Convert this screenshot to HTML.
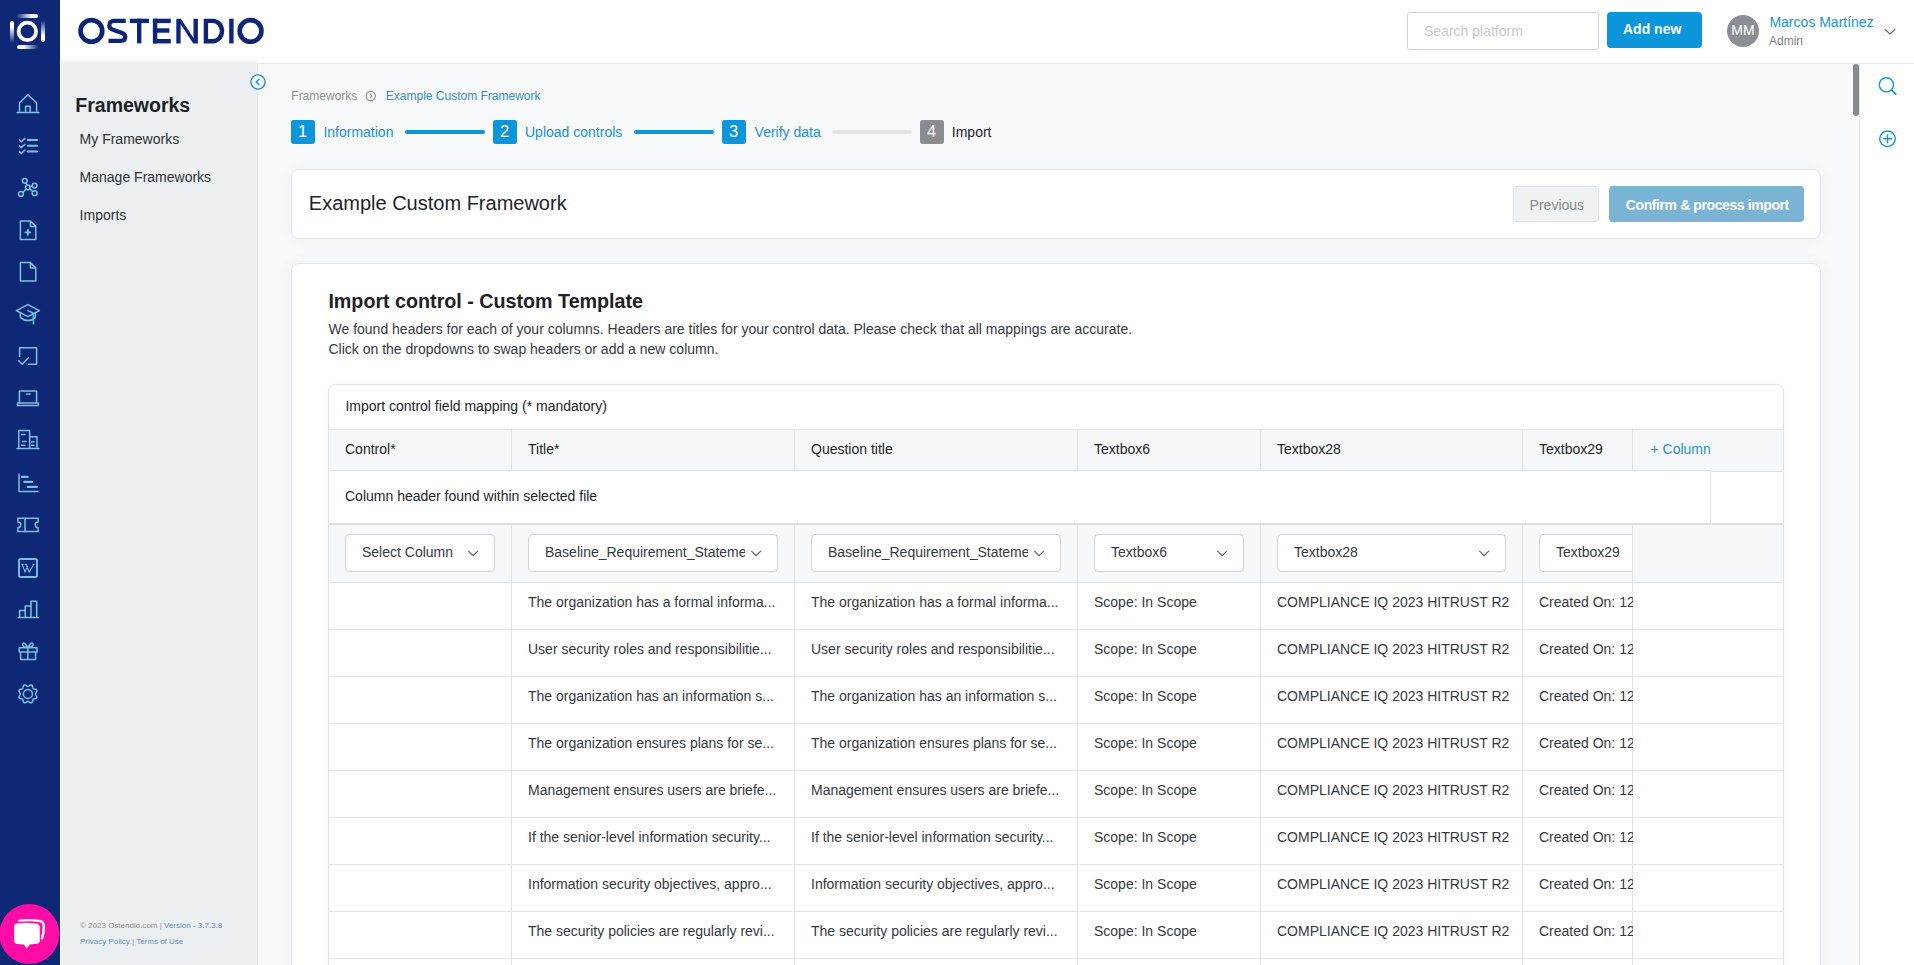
<!DOCTYPE html>
<html><head><meta charset="utf-8">
<style>
*{box-sizing:border-box;margin:0;padding:0}
html,body{width:1914px;height:965px;overflow:hidden;font-family:"Liberation Sans",sans-serif;background:#f7f8fa}
.r{position:absolute}
.t{position:absolute;white-space:nowrap;line-height:1}
</style></head>
<body>
<div class="r" style="left:0px;top:0px;width:60px;height:965px;background:#0e2876"></div>
<div class="r" style="left:60px;top:0px;width:1854px;height:63px;background:#fff"></div>
<div class="r" style="left:258px;top:63px;width:1656px;height:1px;background:#e4e6e9"></div>
<div class="r" style="left:60px;top:64px;width:198px;height:901px;background:#eceff2"></div>
<div class="r" style="left:61px;top:57px;width:197px;height:7px;background:linear-gradient(to bottom,rgba(236,239,242,0),#eceff2)"></div>
<div class="r" style="left:60px;top:57px;width:1px;height:908px;background:#fff"></div>
<div class="r" style="left:257px;top:64px;width:1px;height:901px;background:#e7e9ec"></div>
<div class="r" style="left:258px;top:64px;width:1594px;height:901px;background:#f8f9fa"></div>
<div class="r" style="left:1852px;top:64px;width:7px;height:901px;background:#f9f9fa"></div>
<div class="r" style="left:1853px;top:64px;width:6px;height:52px;background:#878a8e;border-radius:3px"></div>
<div class="r" style="left:1859px;top:64px;width:1px;height:901px;background:#e2e3e5"></div>
<div class="r" style="left:1860px;top:64px;width:54px;height:901px;background:#fff"></div>
<svg class="r" style="left:0;top:0" width="60" height="60" viewBox="0 0 60 60">
<defs>
<linearGradient id="gt" x1="0" x2="1" y1="0" y2="0"><stop offset="0" stop-color="#fff" stop-opacity="0"/><stop offset="0.72" stop-color="#fff" stop-opacity="1"/></linearGradient>
<linearGradient id="gb" x1="1" x2="0" y1="0" y2="0"><stop offset="0" stop-color="#fff" stop-opacity="0"/><stop offset="0.72" stop-color="#fff" stop-opacity="1"/></linearGradient>
<linearGradient id="gl" x1="0" x2="0" y1="1" y2="0"><stop offset="0" stop-color="#fff" stop-opacity="0"/><stop offset="0.72" stop-color="#fff" stop-opacity="1"/></linearGradient>
<linearGradient id="gr" x1="0" x2="0" y1="0" y2="1"><stop offset="0" stop-color="#fff" stop-opacity="0"/><stop offset="0.72" stop-color="#fff" stop-opacity="1"/></linearGradient>
</defs>
<rect x="16" y="14" width="22" height="4" rx="2" fill="url(#gt)"/>
<rect x="17" y="45" width="21.5" height="4" rx="2" fill="url(#gb)"/>
<rect x="10" y="21" width="4" height="22" rx="2" fill="url(#gl)"/>
<rect x="41" y="20" width="4" height="22" rx="2" fill="url(#gr)"/>
<circle cx="27.4" cy="31.4" r="8.7" fill="none" stroke="#fff" stroke-width="3.8"/>
</svg>
<svg class="r" style="left:0;top:80px" width="60" height="640" viewBox="0 80 60 640">
<g fill="none" stroke="#78c0e4" stroke-width="1.5" stroke-linecap="round" stroke-linejoin="round">
<!-- home -->
<path d="M17 112.6 H39 M19.5 112.6 V102.8 L27.9 94.8 L36.6 102.8 V112.6 M25.6 112.6 V106.2 H30.2 V112.6"/>
<!-- checklist -->
<path d="M19.5 140 l1.8 1.8 l3.6 -3.4 M19.5 145.8 l1.8 1.8 l3.6 -3.4 M19.5 151.6 l1.8 1.8 l3.6 -3.4"/>
<path d="M27.8 140 H37 M27.8 145.8 H37 M27.8 151.6 H37" stroke-width="2"/>
<!-- network -->
<circle cx="27.9" cy="187.4" r="2.3"/><circle cx="24.8" cy="180.8" r="2.4"/><circle cx="34.6" cy="185.6" r="2.4"/><circle cx="34.6" cy="193.2" r="2.4"/><circle cx="21" cy="193.9" r="2.4"/>
<path d="M25.9 183 L27 185.3 M30.1 186.8 L32.3 186.1 M29.9 188.7 L32.5 191.6 M25.9 188.7 L23.1 192.6"/>
<!-- doc plus -->
<path d="M20.4 221 H30.4 L35.8 226.4 V239.4 H20.4 Z M30.4 221 V226.4 H35.8"/>
<path d="M25.5 232.4 H30.3 M27.9 230 V234.8" stroke-width="1.9"/>
<!-- doc -->
<path d="M20.4 262.6 H30.4 L35.8 268 V281 H20.4 Z M30.4 262.6 V268 H35.8"/>
<!-- graduation -->
<path d="M16.4 310.6 L27.9 304.6 L39.4 310.6 L27.9 316.6 Z"/>
<path d="M20.4 312.8 V317.6 Q27.9 323.6 35.4 317.6 V312.8"/>
<path d="M27.9 310.6 L33.4 313.2 V323.8"/>
<!-- check square -->
<path d="M19.6 356.4 V347.8 H36.6 V364.2 H28.6"/>
<path d="M18.8 360.8 L22.2 364.2 L28.4 357.8"/>
<!-- laptop -->
<path d="M19.4 403 V391 H36.6 V403 M17.6 403 H38.2 V405.4 H17.6 Z M26.4 393.9 H30"/>
<!-- building -->
<path d="M16.8 448.4 H39 M18.8 448.4 V430.6 H29.6 V448.4 M29.6 436.8 H37 V448.4"/>
<path d="M21.6 434.6 H25 M22.4 441.4 H26 M21.6 445.2 H25 M31.6 441.8 H34 M31.6 445.2 H34" stroke-width="1.5"/>
<!-- gantt -->
<path d="M19 474 V491.6 H37.8"/>
<path d="M22 476.9 H27.6 M24.4 481.9 H31.9 M27.9 486.8 H36.9" stroke-width="2.2"/>
<!-- ticket -->
<path d="M17.9 518.3 H38.1 V521.9 A2.9 2.9 0 0 0 38.1 527.7 V531.5 H17.9 V527.7 A2.9 2.9 0 0 0 17.9 521.9 Z"/>
<path d="M25 518.4 V531.4"/>
<!-- W box -->
<rect x="19" y="559" width="18" height="18" rx="1.8" stroke-width="1.9"/>
<!-- bar chart -->
<path d="M18.2 617.6 H38.2 M19.6 617.6 V610.4 H25.2 V617.6 M25.2 617.6 V606 H31 V617.6 M31 617.6 V601.2 H36.7 V617.6"/>
<!-- gift -->
<path d="M19.2 647.8 H37 V652 H19.2 Z M20.6 652 V659.4 H35.6 V652 M27.9 647.8 V659.4"/>
<path d="M27.9 647.6 Q24 641 22.8 644 Q22.2 646.8 27.9 647.6 Q31.8 641 33 644 Q33.6 646.8 27.9 647.6"/>
<!-- gear -->
<circle cx="27.93" cy="693.9" r="4.5"/>
</g>
<path fill="none" stroke="#78c0e4" stroke-width="1.05" stroke-linecap="butt" d="M21.3 564.3 H23.6 M24.9 564.3 H26.9 M32.6 564.3 H34.6 M22.3 564.3 L25 572 L27.8 565.6 M25.8 564.3 L29.2 572 L33.8 564.3"/>
<path fill="none" stroke="#78c0e4" stroke-width="1.5" stroke-linejoin="round" d="M35.43 693.90 L35.48 694.20 L35.61 694.50 L35.81 694.83 L36.05 695.19 L36.32 695.57 L36.56 695.97 L36.75 696.39 L36.87 696.80 L36.89 697.20 L36.80 697.57 L36.60 697.90 L36.30 698.17 L35.93 698.38 L35.50 698.54 L35.04 698.65 L34.58 698.73 L34.16 698.81 L33.79 698.90 L33.48 699.03 L33.23 699.20 L33.06 699.45 L32.93 699.76 L32.84 700.13 L32.76 700.55 L32.68 701.01 L32.57 701.47 L32.41 701.90 L32.20 702.27 L31.93 702.57 L31.60 702.77 L31.23 702.86 L30.83 702.84 L30.42 702.72 L30.00 702.53 L29.60 702.29 L29.22 702.02 L28.86 701.78 L28.53 701.58 L28.23 701.45 L27.93 701.40 L27.63 701.45 L27.33 701.58 L27.00 701.78 L26.64 702.02 L26.26 702.29 L25.86 702.53 L25.44 702.72 L25.03 702.84 L24.63 702.86 L24.26 702.77 L23.93 702.57 L23.66 702.27 L23.45 701.90 L23.29 701.47 L23.18 701.01 L23.10 700.55 L23.02 700.13 L22.93 699.76 L22.80 699.45 L22.63 699.20 L22.38 699.03 L22.07 698.90 L21.70 698.81 L21.28 698.73 L20.82 698.65 L20.36 698.54 L19.93 698.38 L19.56 698.17 L19.26 697.90 L19.06 697.57 L18.97 697.20 L18.99 696.80 L19.11 696.39 L19.30 695.97 L19.54 695.57 L19.81 695.19 L20.05 694.83 L20.25 694.50 L20.38 694.20 L20.43 693.90 L20.38 693.60 L20.25 693.30 L20.05 692.97 L19.81 692.61 L19.54 692.23 L19.30 691.83 L19.11 691.41 L18.99 691.00 L18.97 690.60 L19.06 690.23 L19.26 689.90 L19.56 689.63 L19.93 689.42 L20.36 689.26 L20.82 689.15 L21.28 689.07 L21.70 688.99 L22.07 688.90 L22.38 688.77 L22.63 688.60 L22.80 688.35 L22.93 688.04 L23.02 687.67 L23.10 687.25 L23.18 686.79 L23.29 686.33 L23.45 685.90 L23.66 685.53 L23.93 685.23 L24.26 685.03 L24.63 684.94 L25.03 684.96 L25.44 685.08 L25.86 685.27 L26.26 685.51 L26.64 685.78 L27.00 686.02 L27.33 686.22 L27.63 686.35 L27.93 686.40 L28.23 686.35 L28.53 686.22 L28.86 686.02 L29.22 685.78 L29.60 685.51 L30.00 685.27 L30.42 685.08 L30.83 684.96 L31.23 684.94 L31.60 685.03 L31.93 685.23 L32.20 685.53 L32.41 685.90 L32.57 686.33 L32.68 686.79 L32.76 687.25 L32.84 687.67 L32.93 688.04 L33.06 688.35 L33.23 688.60 L33.48 688.77 L33.79 688.90 L34.16 688.99 L34.58 689.07 L35.04 689.15 L35.50 689.26 L35.93 689.42 L36.30 689.63 L36.60 689.90 L36.80 690.23 L36.89 690.60 L36.87 691.00 L36.75 691.41 L36.56 691.83 L36.32 692.23 L36.05 692.61 L35.81 692.97 L35.61 693.30 L35.48 693.60 Z"/>
</svg>
<svg class="r" style="left:0;top:900px" width="62" height="65" viewBox="0 900 62 65">
<circle cx="29.4" cy="934" r="30" fill="#fe0ca6"/>
<path d="M19.4 920.6 Q30 919.4 41 921.2 Q43.8 922.8 43.8 926 Q44 933 42 938.4" fill="none" stroke="#fff" stroke-width="2.4" stroke-linecap="round"/>
<path d="M17 923.4 Q27 922.2 36.6 923.6 Q39.8 924.4 39.8 928 L39.8 940.2 Q39.8 943.4 36.6 943.8 L29.6 944.4 L26.8 948.6 L24 944.4 L17.6 944 Q14.2 943.6 14.2 940.4 L14.2 927 Q14.2 923.8 17 923.4 Z" fill="#fff"/>
</svg>
<svg class="r" style="left:70px;top:5px" width="210" height="53" viewBox="0 0 210 53" fill="#0c2577">
<circle cx="21.4" cy="25.9" r="10.85" fill="none" stroke="#0c2577" stroke-width="4.7"/>
<path d="M55.7 15.85 L44.2 15.85 Q39.3 15.85 39.3 20.4 Q39.3 23.6 43 24.8 L52 28 Q55.3 29.3 55.3 31.8 Q55.3 35.95 51 35.95 L38.5 35.95" fill="none" stroke="#0c2577" stroke-width="4.2"/>
<rect x="59.8" y="13.7" width="19.2" height="4.4"/><rect x="67" y="13.7" width="4.4" height="24.7"/>
<rect x="82.9" y="13.7" width="4.4" height="24.7"/><rect x="82.9" y="13.7" width="17.9" height="4.4"/><rect x="82.9" y="23.3" width="16.5" height="4.4"/><rect x="82.9" y="34" width="17.9" height="4.4"/>
<path d="M106.3 13.7 L110.9 13.7 L123.5 32.9 L123.5 13.7 L127.9 13.7 L127.9 38.4 L123.3 38.4 L110.6 19.2 L110.6 38.4 L106.3 38.4 Z"/>
<path fill-rule="evenodd" d="M133.7 13.7 L142.7 13.7 A 11.5 12.35 0 0 1 142.7 38.4 L133.7 38.4 Z M138.1 18.1 L142.7 18.1 A 7.1 7.95 0 0 1 142.7 34 L138.1 34 Z"/>
<rect x="159.2" y="13.7" width="4.4" height="24.7"/>
<circle cx="180.55" cy="25.9" r="10.85" fill="none" stroke="#0c2577" stroke-width="4.7"/>
</svg>
<div class="r" style="left:1407px;top:12px;width:192px;height:38px;background:#fff;border:1px solid #cfd2d6;border-radius:3px"></div>
<div class="t" style="left:1424.0px;top:24.15px;font-size:14px;font-weight:400;color:#c6c9cd;">Search platform</div>
<div class="r" style="left:1607px;top:12px;width:95px;height:36px;background:#0b95db;border-radius:4px"></div>
<div class="t" style="left:1623.0px;top:21.55px;font-size:14px;font-weight:700;color:#fff;">Add new</div>
<div class="r" style="left:1727px;top:15px;width:32px;height:32px;background:#8b8f94;border-radius:50%"></div>
<div class="t" style="left:1731.3px;top:23.15px;font-size:14px;font-weight:400;color:#fff;">MM</div>
<div class="t" style="left:1769.4px;top:15.15px;font-size:14px;font-weight:400;color:#1a92d8;">Marcos Martínez</div>
<div class="t" style="left:1769.0px;top:34.84px;font-size:12px;font-weight:400;color:#7c8085;">Admin</div>
<svg class="r" style="left:1882px;top:25px" width="16" height="12"><path d="M2.8 4 L8 9.2 L13.2 4" fill="none" stroke="#6a6e73" stroke-width="1.2"/></svg>
<svg class="r" style="left:1870px;top:70px" width="36" height="90" viewBox="1870 70 36 90">
<g fill="none" stroke="#1a92d8" stroke-width="1.4" stroke-linecap="round">
<circle cx="1886.4" cy="84.8" r="7.1"/><path d="M1891.6 90 L1895.8 94.2" stroke-width="1.7"/>
<circle cx="1887.5" cy="138.8" r="7.8"/><path d="M1883.6 138.8 H1891.4 M1887.5 134.9 V142.7" stroke-width="1.5"/>
</g></svg>
<svg class="r" style="left:248px;top:72px" width="20" height="20" viewBox="248 72 20 20"><circle cx="258" cy="82" r="7.1" fill="#fff" stroke="#1a92d8" stroke-width="1.4"/><path d="M259 79.2 L256.2 82 L259 84.8" fill="none" stroke="#1a92d8" stroke-width="1.5" stroke-linecap="round"/></svg>
<div class="t" style="left:75.3px;top:96.49px;font-size:19.5px;font-weight:700;color:#1b1e22;">Frameworks</div>
<div class="t" style="left:79.6px;top:132.45px;font-size:14px;font-weight:400;color:#2b2f33;">My Frameworks</div>
<div class="t" style="left:79.6px;top:170.15px;font-size:14px;font-weight:400;color:#2b2f33;">Manage Frameworks</div>
<div class="t" style="left:79.6px;top:208.15px;font-size:14px;font-weight:400;color:#2b2f33;">Imports</div>
<div class="t" style="left:80.0px;top:922.23px;font-size:8px;font-weight:400;color:#8c9196;"><span style="color:#8c9196">© 2023 Ostendio.com | </span><span style="color:#5e93c4">Version - 3.7.3.8</span></div>
<div class="t" style="left:80.0px;top:937.83px;font-size:8px;font-weight:400;color:#5e93c4;">Privacy Policy <span style="color:#8c9196">|</span> Terms of Use</div>
<div class="t" style="left:291.3px;top:89.64px;font-size:12px;font-weight:400;color:#8b8f94;">Frameworks</div>
<svg class="r" style="left:364px;top:89px" width="14" height="14" viewBox="364 89 14 14"><circle cx="370.8" cy="96" r="4.6" fill="none" stroke="#8b8f94" stroke-width="1.1"/><path d="M370 93.9 L372 96 L370 98.1" fill="none" stroke="#8b8f94" stroke-width="1.1"/></svg>
<div class="t" style="left:385.8px;top:89.64px;font-size:12px;font-weight:400;color:#2a90d3;">Example Custom Framework</div>
<div class="r" style="left:291px;top:120px;width:24px;height:24px;background:#0b95db;border-radius:3px"></div>
<div class="t" style="left:298.0px;top:123.23px;font-size:16.5px;font-weight:400;color:#fff;">1</div>
<div class="r" style="left:493px;top:120px;width:24px;height:24px;background:#0b95db;border-radius:3px"></div>
<div class="t" style="left:500.0px;top:123.23px;font-size:16.5px;font-weight:400;color:#fff;">2</div>
<div class="r" style="left:722px;top:120px;width:24px;height:24px;background:#0b95db;border-radius:3px"></div>
<div class="t" style="left:729.0px;top:123.23px;font-size:16.5px;font-weight:400;color:#fff;">3</div>
<div class="r" style="left:920px;top:120px;width:24px;height:24px;background:#898c90;border-radius:3px"></div>
<div class="t" style="left:927.0px;top:123.23px;font-size:16.5px;font-weight:400;color:#fff;">4</div>
<div class="t" style="left:323.4px;top:125.35px;font-size:14px;font-weight:400;color:#1d90d5;">Information</div>
<div class="t" style="left:525.0px;top:125.35px;font-size:14px;font-weight:400;color:#1d90d5;">Upload controls</div>
<div class="t" style="left:754.6px;top:125.35px;font-size:14px;font-weight:400;color:#1d90d5;">Verify data</div>
<div class="t" style="left:951.8px;top:125.35px;font-size:14px;font-weight:400;color:#212529;">Import</div>
<div class="r" style="left:405px;top:130px;width:80px;height:4px;background:#0b95db;border-radius:2px"></div>
<div class="r" style="left:634px;top:130px;width:80px;height:4px;background:#0b95db;border-radius:2px"></div>
<div class="r" style="left:832px;top:130px;width:80px;height:4px;background:#e1e3e5;border-radius:2px"></div>
<div class="r" style="left:291px;top:169px;width:1530px;height:70px;background:#fff;border:1px solid #e3e4e6;border-radius:8px;box-shadow:0 0 20px rgba(0,0,0,0.035)"></div>
<div class="t" style="left:308.8px;top:193.27px;font-size:20px;font-weight:400;color:#212529;">Example Custom Framework</div>
<div class="r" style="left:1513px;top:186px;width:86px;height:36px;background:#f0f1f3;border:1px solid #dfe1e4;border-radius:4px"></div>
<div class="t" style="left:1529.6px;top:197.85px;font-size:14px;font-weight:400;color:#868a8f;">Previous</div>
<div class="r" style="left:1609px;top:186px;width:195px;height:36px;background:#79b4d4;border-radius:4px"></div>
<div class="t" style="left:1625.8px;top:197.85px;font-size:14px;font-weight:700;color:#fff;letter-spacing:-0.4px">Confirm &amp; process import</div>
<div class="r" style="left:291px;top:263px;width:1530px;height:720px;background:#fff;border:1px solid #e3e4e6;border-radius:8px;box-shadow:0 0 20px rgba(0,0,0,0.035)"></div>
<div class="t" style="left:328.4px;top:292.32px;font-size:19.7px;font-weight:700;color:#1d2024;">Import control - Custom Template</div>
<div class="t" style="left:328.5px;top:321.95px;font-size:14px;font-weight:400;color:#343a40;">We found headers for each of your columns. Headers are titles for your control data. Please check that all mappings are accurate.</div>
<div class="t" style="left:328.5px;top:341.55px;font-size:14px;font-weight:400;color:#343a40;">Click on the dropdowns to swap headers or add a new column.</div>
<div class="r" style="left:328px;top:384px;width:1456px;height:620px;background:#fff;border:1px solid #e2e3e5;border-radius:8px;box-shadow:0 0 14px rgba(0,0,0,0.03)"></div>
<div class="t" style="left:345.4px;top:399.15px;font-size:14px;font-weight:400;color:#212529;">Import control field mapping (* mandatory)</div>
<div class="r" style="left:329px;top:429px;width:1454px;height:42px;background:#f7f8fa;border-top:1px solid #e2e3e5;border-bottom:1px solid #e2e3e5"></div>
<div class="r" style="left:511px;top:430px;width:1px;height:40px;background:#e2e3e5"></div>
<div class="r" style="left:794px;top:430px;width:1px;height:40px;background:#e2e3e5"></div>
<div class="r" style="left:1077px;top:430px;width:1px;height:40px;background:#e2e3e5"></div>
<div class="r" style="left:1260px;top:430px;width:1px;height:40px;background:#e2e3e5"></div>
<div class="r" style="left:1522px;top:430px;width:1px;height:40px;background:#e2e3e5"></div>
<div class="r" style="left:1632px;top:430px;width:1px;height:40px;background:#e2e3e5"></div>
<div class="t" style="left:345.0px;top:442.35px;font-size:14px;font-weight:400;color:#212529;">Control*</div>
<div class="t" style="left:528.0px;top:442.35px;font-size:14px;font-weight:400;color:#212529;">Title*</div>
<div class="t" style="left:811.0px;top:442.35px;font-size:14px;font-weight:400;color:#212529;">Question title</div>
<div class="t" style="left:1094.0px;top:442.35px;font-size:14px;font-weight:400;color:#212529;">Textbox6</div>
<div class="t" style="left:1277.0px;top:442.35px;font-size:14px;font-weight:400;color:#212529;">Textbox28</div>
<div class="t" style="left:1539.0px;top:442.35px;font-size:14px;font-weight:400;color:#212529;">Textbox29</div>
<div class="t" style="left:1650.5px;top:442.35px;font-size:14px;font-weight:400;color:#2a90d3;">+ Column</div>
<div class="t" style="left:345.0px;top:489.15px;font-size:14px;font-weight:400;color:#212529;">Column header found within selected file</div>
<div class="r" style="left:1711px;top:470px;width:72px;height:1px;background:#f7f8fa"></div>
<div class="r" style="left:1711px;top:471px;width:72px;height:1px;background:#e2e3e5"></div>
<div class="r" style="left:1710px;top:470px;width:1px;height:53px;background:#e2e3e5"></div>
<div class="r" style="left:329px;top:523px;width:1454px;height:2px;background:#dedfe1"></div>
<div class="r" style="left:329px;top:525px;width:1454px;height:57px;background:#f7f8fa"></div>
<div class="r" style="left:329px;top:582px;width:1454px;height:1px;background:#e2e3e5"></div>
<div class="r" style="left:345px;top:534px;width:150px;height:38px;background:#fff;border:1px solid #d3d4d6;border-radius:4px"></div>
<div class="t" style="left:362.0px;top:544.75px;font-size:14px;font-weight:400;color:#343a40;">Select Column</div>
<svg class="r" style="left:467px;top:547px" width="14" height="12"><path d="M1.3 3.9 L6.1 8.7 L10.9 3.9" fill="none" stroke="#555a5f" stroke-width="1.05"/></svg>
<div class="r" style="left:528px;top:534px;width:250px;height:38px;background:#fff;border:1px solid #d3d4d6;border-radius:4px"></div>
<div class="t" style="left:545px;top:541.75px;font-size:14px;line-height:20px;color:#343a40;width:200px;overflow:hidden">Baseline_Requirement_Statement</div>
<svg class="r" style="left:750px;top:547px" width="14" height="12"><path d="M1.3 3.9 L6.1 8.7 L10.9 3.9" fill="none" stroke="#555a5f" stroke-width="1.05"/></svg>
<div class="r" style="left:811px;top:534px;width:250px;height:38px;background:#fff;border:1px solid #d3d4d6;border-radius:4px"></div>
<div class="t" style="left:828px;top:541.75px;font-size:14px;line-height:20px;color:#343a40;width:200px;overflow:hidden">Baseline_Requirement_Statement</div>
<svg class="r" style="left:1033px;top:547px" width="14" height="12"><path d="M1.3 3.9 L6.1 8.7 L10.9 3.9" fill="none" stroke="#555a5f" stroke-width="1.05"/></svg>
<div class="r" style="left:1094px;top:534px;width:150px;height:38px;background:#fff;border:1px solid #d3d4d6;border-radius:4px"></div>
<div class="t" style="left:1111.0px;top:544.75px;font-size:14px;font-weight:400;color:#343a40;">Textbox6</div>
<svg class="r" style="left:1216px;top:547px" width="14" height="12"><path d="M1.3 3.9 L6.1 8.7 L10.9 3.9" fill="none" stroke="#555a5f" stroke-width="1.05"/></svg>
<div class="r" style="left:1277px;top:534px;width:229px;height:38px;background:#fff;border:1px solid #d3d4d6;border-radius:4px"></div>
<div class="t" style="left:1294.0px;top:544.75px;font-size:14px;font-weight:400;color:#343a40;">Textbox28</div>
<svg class="r" style="left:1478px;top:547px" width="14" height="12"><path d="M1.3 3.9 L6.1 8.7 L10.9 3.9" fill="none" stroke="#555a5f" stroke-width="1.05"/></svg>
<div class="r" style="left:1539px;top:534px;width:93px;height:38px;overflow:hidden"><div style="position:absolute;left:0;top:0;width:150px;height:38px;background:#fff;border:1px solid #d3d4d6;border-radius:4px"></div><div class="t" style="left:17px;top:10.75px;font-size:14px;color:#343a40">Textbox29</div></div>
<div class="r" style="left:511px;top:525px;width:1px;height:57px;background:#e2e3e5"></div>
<div class="r" style="left:794px;top:525px;width:1px;height:57px;background:#e2e3e5"></div>
<div class="r" style="left:1077px;top:525px;width:1px;height:57px;background:#e2e3e5"></div>
<div class="r" style="left:1260px;top:525px;width:1px;height:57px;background:#e2e3e5"></div>
<div class="r" style="left:1522px;top:525px;width:1px;height:57px;background:#e2e3e5"></div>
<div class="r" style="left:1632px;top:525px;width:1px;height:57px;background:#e2e3e5"></div>
<div class="r" style="left:329px;top:629px;width:1454px;height:1px;background:#e2e3e5"></div>
<div class="r" style="left:511px;top:583px;width:1px;height:46px;background:#e2e3e5"></div>
<div class="r" style="left:794px;top:583px;width:1px;height:46px;background:#e2e3e5"></div>
<div class="r" style="left:1077px;top:583px;width:1px;height:46px;background:#e2e3e5"></div>
<div class="r" style="left:1260px;top:583px;width:1px;height:46px;background:#e2e3e5"></div>
<div class="r" style="left:1522px;top:583px;width:1px;height:46px;background:#e2e3e5"></div>
<div class="r" style="left:1632px;top:583px;width:1px;height:46px;background:#e2e3e5"></div>
<div class="t" style="left:528.0px;top:594.75px;font-size:14px;font-weight:400;color:#343a40;">The organization has a formal informa...</div>
<div class="t" style="left:811.0px;top:594.75px;font-size:14px;font-weight:400;color:#343a40;">The organization has a formal informa...</div>
<div class="t" style="left:1094.0px;top:594.75px;font-size:14px;font-weight:400;color:#343a40;">Scope: In Scope</div>
<div class="t" style="left:1277.0px;top:594.75px;font-size:14px;font-weight:400;color:#343a40;">COMPLIANCE IQ 2023 HITRUST R2</div>
<div class="t" style="left:1539px;top:594.75px;font-size:14px;color:#343a40;width:94px;overflow:hidden">Created On: 12/01/2023</div>
<div class="r" style="left:329px;top:676px;width:1454px;height:1px;background:#e2e3e5"></div>
<div class="r" style="left:511px;top:630px;width:1px;height:46px;background:#e2e3e5"></div>
<div class="r" style="left:794px;top:630px;width:1px;height:46px;background:#e2e3e5"></div>
<div class="r" style="left:1077px;top:630px;width:1px;height:46px;background:#e2e3e5"></div>
<div class="r" style="left:1260px;top:630px;width:1px;height:46px;background:#e2e3e5"></div>
<div class="r" style="left:1522px;top:630px;width:1px;height:46px;background:#e2e3e5"></div>
<div class="r" style="left:1632px;top:630px;width:1px;height:46px;background:#e2e3e5"></div>
<div class="t" style="left:528.0px;top:641.75px;font-size:14px;font-weight:400;color:#343a40;">User security roles and responsibilitie...</div>
<div class="t" style="left:811.0px;top:641.75px;font-size:14px;font-weight:400;color:#343a40;">User security roles and responsibilitie...</div>
<div class="t" style="left:1094.0px;top:641.75px;font-size:14px;font-weight:400;color:#343a40;">Scope: In Scope</div>
<div class="t" style="left:1277.0px;top:641.75px;font-size:14px;font-weight:400;color:#343a40;">COMPLIANCE IQ 2023 HITRUST R2</div>
<div class="t" style="left:1539px;top:641.75px;font-size:14px;color:#343a40;width:94px;overflow:hidden">Created On: 12/01/2023</div>
<div class="r" style="left:329px;top:723px;width:1454px;height:1px;background:#e2e3e5"></div>
<div class="r" style="left:511px;top:677px;width:1px;height:46px;background:#e2e3e5"></div>
<div class="r" style="left:794px;top:677px;width:1px;height:46px;background:#e2e3e5"></div>
<div class="r" style="left:1077px;top:677px;width:1px;height:46px;background:#e2e3e5"></div>
<div class="r" style="left:1260px;top:677px;width:1px;height:46px;background:#e2e3e5"></div>
<div class="r" style="left:1522px;top:677px;width:1px;height:46px;background:#e2e3e5"></div>
<div class="r" style="left:1632px;top:677px;width:1px;height:46px;background:#e2e3e5"></div>
<div class="t" style="left:528.0px;top:688.75px;font-size:14px;font-weight:400;color:#343a40;">The organization has an information s...</div>
<div class="t" style="left:811.0px;top:688.75px;font-size:14px;font-weight:400;color:#343a40;">The organization has an information s...</div>
<div class="t" style="left:1094.0px;top:688.75px;font-size:14px;font-weight:400;color:#343a40;">Scope: In Scope</div>
<div class="t" style="left:1277.0px;top:688.75px;font-size:14px;font-weight:400;color:#343a40;">COMPLIANCE IQ 2023 HITRUST R2</div>
<div class="t" style="left:1539px;top:688.75px;font-size:14px;color:#343a40;width:94px;overflow:hidden">Created On: 12/01/2023</div>
<div class="r" style="left:329px;top:770px;width:1454px;height:1px;background:#e2e3e5"></div>
<div class="r" style="left:511px;top:724px;width:1px;height:46px;background:#e2e3e5"></div>
<div class="r" style="left:794px;top:724px;width:1px;height:46px;background:#e2e3e5"></div>
<div class="r" style="left:1077px;top:724px;width:1px;height:46px;background:#e2e3e5"></div>
<div class="r" style="left:1260px;top:724px;width:1px;height:46px;background:#e2e3e5"></div>
<div class="r" style="left:1522px;top:724px;width:1px;height:46px;background:#e2e3e5"></div>
<div class="r" style="left:1632px;top:724px;width:1px;height:46px;background:#e2e3e5"></div>
<div class="t" style="left:528.0px;top:735.75px;font-size:14px;font-weight:400;color:#343a40;">The organization ensures plans for se...</div>
<div class="t" style="left:811.0px;top:735.75px;font-size:14px;font-weight:400;color:#343a40;">The organization ensures plans for se...</div>
<div class="t" style="left:1094.0px;top:735.75px;font-size:14px;font-weight:400;color:#343a40;">Scope: In Scope</div>
<div class="t" style="left:1277.0px;top:735.75px;font-size:14px;font-weight:400;color:#343a40;">COMPLIANCE IQ 2023 HITRUST R2</div>
<div class="t" style="left:1539px;top:735.75px;font-size:14px;color:#343a40;width:94px;overflow:hidden">Created On: 12/01/2023</div>
<div class="r" style="left:329px;top:817px;width:1454px;height:1px;background:#e2e3e5"></div>
<div class="r" style="left:511px;top:771px;width:1px;height:46px;background:#e2e3e5"></div>
<div class="r" style="left:794px;top:771px;width:1px;height:46px;background:#e2e3e5"></div>
<div class="r" style="left:1077px;top:771px;width:1px;height:46px;background:#e2e3e5"></div>
<div class="r" style="left:1260px;top:771px;width:1px;height:46px;background:#e2e3e5"></div>
<div class="r" style="left:1522px;top:771px;width:1px;height:46px;background:#e2e3e5"></div>
<div class="r" style="left:1632px;top:771px;width:1px;height:46px;background:#e2e3e5"></div>
<div class="t" style="left:528.0px;top:782.75px;font-size:14px;font-weight:400;color:#343a40;">Management ensures users are briefe...</div>
<div class="t" style="left:811.0px;top:782.75px;font-size:14px;font-weight:400;color:#343a40;">Management ensures users are briefe...</div>
<div class="t" style="left:1094.0px;top:782.75px;font-size:14px;font-weight:400;color:#343a40;">Scope: In Scope</div>
<div class="t" style="left:1277.0px;top:782.75px;font-size:14px;font-weight:400;color:#343a40;">COMPLIANCE IQ 2023 HITRUST R2</div>
<div class="t" style="left:1539px;top:782.75px;font-size:14px;color:#343a40;width:94px;overflow:hidden">Created On: 12/01/2023</div>
<div class="r" style="left:329px;top:864px;width:1454px;height:1px;background:#e2e3e5"></div>
<div class="r" style="left:511px;top:818px;width:1px;height:46px;background:#e2e3e5"></div>
<div class="r" style="left:794px;top:818px;width:1px;height:46px;background:#e2e3e5"></div>
<div class="r" style="left:1077px;top:818px;width:1px;height:46px;background:#e2e3e5"></div>
<div class="r" style="left:1260px;top:818px;width:1px;height:46px;background:#e2e3e5"></div>
<div class="r" style="left:1522px;top:818px;width:1px;height:46px;background:#e2e3e5"></div>
<div class="r" style="left:1632px;top:818px;width:1px;height:46px;background:#e2e3e5"></div>
<div class="t" style="left:528.0px;top:829.75px;font-size:14px;font-weight:400;color:#343a40;">If the senior-level information security...</div>
<div class="t" style="left:811.0px;top:829.75px;font-size:14px;font-weight:400;color:#343a40;">If the senior-level information security...</div>
<div class="t" style="left:1094.0px;top:829.75px;font-size:14px;font-weight:400;color:#343a40;">Scope: In Scope</div>
<div class="t" style="left:1277.0px;top:829.75px;font-size:14px;font-weight:400;color:#343a40;">COMPLIANCE IQ 2023 HITRUST R2</div>
<div class="t" style="left:1539px;top:829.75px;font-size:14px;color:#343a40;width:94px;overflow:hidden">Created On: 12/01/2023</div>
<div class="r" style="left:329px;top:911px;width:1454px;height:1px;background:#e2e3e5"></div>
<div class="r" style="left:511px;top:865px;width:1px;height:46px;background:#e2e3e5"></div>
<div class="r" style="left:794px;top:865px;width:1px;height:46px;background:#e2e3e5"></div>
<div class="r" style="left:1077px;top:865px;width:1px;height:46px;background:#e2e3e5"></div>
<div class="r" style="left:1260px;top:865px;width:1px;height:46px;background:#e2e3e5"></div>
<div class="r" style="left:1522px;top:865px;width:1px;height:46px;background:#e2e3e5"></div>
<div class="r" style="left:1632px;top:865px;width:1px;height:46px;background:#e2e3e5"></div>
<div class="t" style="left:528.0px;top:876.75px;font-size:14px;font-weight:400;color:#343a40;">Information security objectives, appro...</div>
<div class="t" style="left:811.0px;top:876.75px;font-size:14px;font-weight:400;color:#343a40;">Information security objectives, appro...</div>
<div class="t" style="left:1094.0px;top:876.75px;font-size:14px;font-weight:400;color:#343a40;">Scope: In Scope</div>
<div class="t" style="left:1277.0px;top:876.75px;font-size:14px;font-weight:400;color:#343a40;">COMPLIANCE IQ 2023 HITRUST R2</div>
<div class="t" style="left:1539px;top:876.75px;font-size:14px;color:#343a40;width:94px;overflow:hidden">Created On: 12/01/2023</div>
<div class="r" style="left:329px;top:958px;width:1454px;height:1px;background:#e2e3e5"></div>
<div class="r" style="left:511px;top:912px;width:1px;height:46px;background:#e2e3e5"></div>
<div class="r" style="left:794px;top:912px;width:1px;height:46px;background:#e2e3e5"></div>
<div class="r" style="left:1077px;top:912px;width:1px;height:46px;background:#e2e3e5"></div>
<div class="r" style="left:1260px;top:912px;width:1px;height:46px;background:#e2e3e5"></div>
<div class="r" style="left:1522px;top:912px;width:1px;height:46px;background:#e2e3e5"></div>
<div class="r" style="left:1632px;top:912px;width:1px;height:46px;background:#e2e3e5"></div>
<div class="t" style="left:528.0px;top:923.75px;font-size:14px;font-weight:400;color:#343a40;">The security policies are regularly revi...</div>
<div class="t" style="left:811.0px;top:923.75px;font-size:14px;font-weight:400;color:#343a40;">The security policies are regularly revi...</div>
<div class="t" style="left:1094.0px;top:923.75px;font-size:14px;font-weight:400;color:#343a40;">Scope: In Scope</div>
<div class="t" style="left:1277.0px;top:923.75px;font-size:14px;font-weight:400;color:#343a40;">COMPLIANCE IQ 2023 HITRUST R2</div>
<div class="t" style="left:1539px;top:923.75px;font-size:14px;color:#343a40;width:94px;overflow:hidden">Created On: 12/01/2023</div>
<div class="r" style="left:329px;top:1005px;width:1454px;height:1px;background:#e2e3e5"></div>
<div class="r" style="left:511px;top:959px;width:1px;height:46px;background:#e2e3e5"></div>
<div class="r" style="left:794px;top:959px;width:1px;height:46px;background:#e2e3e5"></div>
<div class="r" style="left:1077px;top:959px;width:1px;height:46px;background:#e2e3e5"></div>
<div class="r" style="left:1260px;top:959px;width:1px;height:46px;background:#e2e3e5"></div>
<div class="r" style="left:1522px;top:959px;width:1px;height:46px;background:#e2e3e5"></div>
<div class="r" style="left:1632px;top:959px;width:1px;height:46px;background:#e2e3e5"></div>
<div class="t" style="left:528.0px;top:970.75px;font-size:14px;font-weight:400;color:#343a40;">The organization has a formal informa...</div>
<div class="t" style="left:811.0px;top:970.75px;font-size:14px;font-weight:400;color:#343a40;">The organization has a formal informa...</div>
<div class="t" style="left:1094.0px;top:970.75px;font-size:14px;font-weight:400;color:#343a40;">Scope: In Scope</div>
<div class="t" style="left:1277.0px;top:970.75px;font-size:14px;font-weight:400;color:#343a40;">COMPLIANCE IQ 2023 HITRUST R2</div>
<div class="t" style="left:1539px;top:970.75px;font-size:14px;color:#343a40;width:94px;overflow:hidden">Created On: 12/01/2023</div>
</body></html>
